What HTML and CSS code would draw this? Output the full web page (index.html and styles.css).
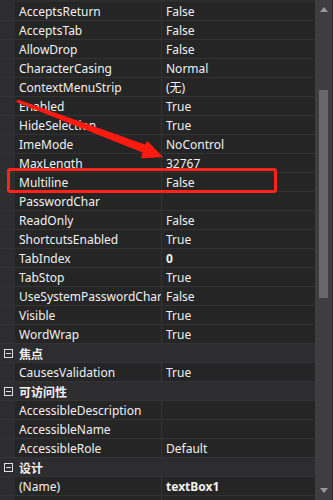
FILE: index.html
```html
<!DOCTYPE html>
<html>
<head>
<meta charset="utf-8">
<link rel="stylesheet" href="styles.css">
</head>
<body>
<div class="panel">
  <div class="grid">
    <div class="row"><div class="gut"></div><div class="name">AcceptsReturn</div><div class="val">False</div></div>
    <div class="row"><div class="gut"></div><div class="name">AcceptsTab</div><div class="val">False</div></div>
    <div class="row"><div class="gut"></div><div class="name">AllowDrop</div><div class="val">False</div></div>
    <div class="row"><div class="gut"></div><div class="name">CharacterCasing</div><div class="val">Normal</div></div>
    <div class="row"><div class="gut"></div><div class="name">ContextMenuStrip</div><div class="val">(无)</div></div>
    <div class="row"><div class="gut"></div><div class="name">Enabled</div><div class="val">True</div></div>
    <div class="row"><div class="gut"></div><div class="name">HideSelection</div><div class="val">True</div></div>
    <div class="row"><div class="gut"></div><div class="name">ImeMode</div><div class="val">NoControl</div></div>
    <div class="row"><div class="gut"></div><div class="name">MaxLength</div><div class="val">32767</div></div>
    <div class="row"><div class="gut"></div><div class="name">Multiline</div><div class="val">False</div></div>
    <div class="row"><div class="gut"></div><div class="name">PasswordChar</div><div class="val"></div></div>
    <div class="row"><div class="gut"></div><div class="name">ReadOnly</div><div class="val">False</div></div>
    <div class="row"><div class="gut"></div><div class="name">ShortcutsEnabled</div><div class="val">True</div></div>
    <div class="row"><div class="gut"></div><div class="name">TabIndex</div><div class="val bold">0</div></div>
    <div class="row"><div class="gut"></div><div class="name">TabStop</div><div class="val">True</div></div>
    <div class="row"><div class="gut"></div><div class="name">UseSystemPasswordChar</div><div class="val">False</div></div>
    <div class="row"><div class="gut"></div><div class="name">Visible</div><div class="val">True</div></div>
    <div class="row"><div class="gut"></div><div class="name">WordWrap</div><div class="val">True</div></div>
    <div class="row cat"><div class="gut"><span class="box"></span></div><div class="catname">焦点</div></div>
    <div class="row"><div class="gut"></div><div class="name">CausesValidation</div><div class="val">True</div></div>
    <div class="row cat"><div class="gut"><span class="box"></span></div><div class="catname">可访问性</div></div>
    <div class="row"><div class="gut"></div><div class="name">AccessibleDescription</div><div class="val"></div></div>
    <div class="row"><div class="gut"></div><div class="name">AccessibleName</div><div class="val"></div></div>
    <div class="row"><div class="gut"></div><div class="name">AccessibleRole</div><div class="val">Default</div></div>
    <div class="row cat"><div class="gut"><span class="box"></span></div><div class="catname">设计</div></div>
    <div class="row"><div class="gut"></div><div class="name">(Name)</div><div class="val bold">textBox1</div></div>
    <div class="row"><div class="gut"></div><div class="name"></div><div class="val"></div></div>
  </div>
  <div class="scroll">
    <div class="arrow up"></div>
    <div class="thumb"></div>
    <div class="arrow down"></div>
  </div>
  <div class="highlight"></div>
  <svg class="pointer" width="333" height="500" viewBox="0 0 333 500">
    <polygon points="16,102 18,99.5 145,144.5 147.5,141 163,157 141,158.5 142.5,152.5" fill="#ff1a10"/>
  </svg>
</div>
</body>
</html>
```
FILE: styles.css
```css
html, body {
  margin: 0;
  padding: 0;
  background: #2d2d30;
}
.panel {
  position: relative;
  width: 333px;
  height: 500px;
  overflow: hidden;
  display: flex;
  font-family: "Noto Sans", "Noto Sans CJK SC", sans-serif;
  font-size: 12px;
  color: #f1f1f1;
  background: #2d2d30;
}
.grid {
  width: 315px;
  padding-top: 2px;
  display: flex;
  flex-direction: column;
}
.row {
  display: flex;
  height: 18px;
  border-bottom: 1px solid #333336;
  flex-shrink: 0;
}
.gut {
  width: 15px;
  flex-shrink: 0;
  background: #2d2d30;
  display: flex;
  align-items: center;
  justify-content: center;
}
.name {
  width: 142px;
  flex-shrink: 0;
  padding-left: 4px;
  background: #252526;
  line-height: 20px;
  white-space: nowrap;
  overflow: hidden;
}
.val {
  flex: 1;
  border-left: 1px solid #333336;
  padding-left: 4px;
  background: #252526;
  line-height: 20px;
  white-space: nowrap;
  overflow: hidden;
}
.bold {
  font-weight: bold;
}
.cat {
  background: #2d2d30;
}
.catname {
  padding-left: 4px;
  font-weight: bold;
  line-height: 19px;
  font-family: "Noto Sans CJK SC", sans-serif;
}
.box {
  width: 7px;
  height: 7px;
  border: 1px solid #e0e0e0;
  position: relative;
  margin-left: 1px;
}
.box::after {
  content: "";
  position: absolute;
  left: 1px;
  right: 1px;
  top: 3px;
  height: 1px;
  background: #e0e0e0;
}
.scroll {
  width: 17px;
  background: #3e3e42;
  border-right: 1px solid #2d2d30;
  position: relative;
  display: flex;
  flex-direction: column;
  align-items: center;
}
.arrow {
  width: 0;
  height: 0;
  border-left: 4.5px solid transparent;
  border-right: 4.5px solid transparent;
}
.up {
  margin-top: 7px;
  border-bottom: 5px solid #999999;
}
.down {
  margin-top: auto;
  margin-bottom: 7px;
  border-top: 5px solid #999999;
}
.thumb {
  width: 9px;
  height: 208px;
  margin-top: 78px;
  background: #686868;
}
.highlight {
  position: absolute;
  left: 7px;
  top: 168px;
  width: 264px;
  height: 19px;
  border: 3px solid #ff2418;
  border-radius: 3px;
}
.pointer {
  position: absolute;
  left: 0;
  top: 0;
}
```
